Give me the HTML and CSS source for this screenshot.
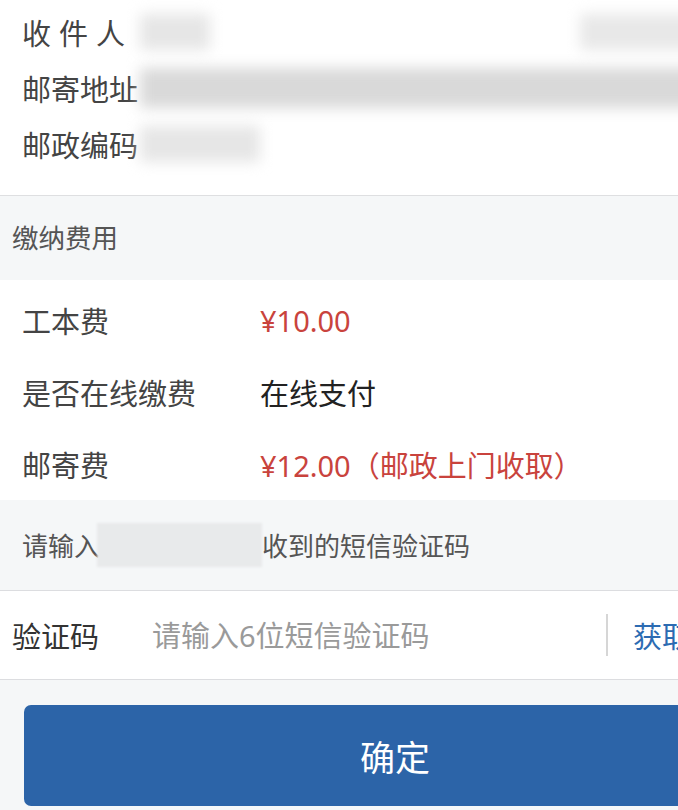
FILE: index.html
```html
<!DOCTYPE html>
<html lang="zh-CN">
<head>
  <meta charset="UTF-8">
  <meta name="viewport" content="width=device-width, initial-scale=1.0">
  <title>缴纳费用</title>
  <link rel="stylesheet" href="styles.css">
</head>
<body>
  <div class="page">
    <!-- 收件信息 -->
    <div class="address">
      <div class="address-row">
        <span class="address-label spaced">收件人</span>
        <span class="mask mask-name"></span>
        <span class="mask mask-phone"></span>
      </div>
      <div class="address-row">
        <span class="address-label">邮寄地址</span>
        <span class="mask mask-addr"></span>
      </div>
      <div class="address-row">
        <span class="address-label">邮政编码</span>
        <span class="mask mask-zip"></span>
      </div>
    </div>

    <div class="section-title">缴纳费用</div>

    <div class="fees">
      <div class="fee-row">
        <span class="fee-label">工本费</span>
        <span class="fee-value price">¥10.00</span>
      </div>
      <div class="fee-row">
        <span class="fee-label">是否在线缴费</span>
        <span class="fee-value">在线支付</span>
      </div>
      <div class="fee-row">
        <span class="fee-label">邮寄费</span>
        <span class="fee-value price">¥12.00（邮政上门收取）</span>
      </div>
    </div>

    <div class="sms-tip">请输入<span class="mask mask-tel"></span>收到的短信验证码</div>

    <div class="code-row">
      <span class="code-label">验证码</span>
      <input class="code-input" type="text" placeholder="请输入6位短信验证码">
      <span class="code-divider"></span>
      <span class="code-btn">获取验证码</span>
    </div>

    <div class="actions">
      <button class="submit-btn">确定</button>
    </div>
  </div>
</body>
</html>
```

FILE: styles.css
```css
body {
  margin: 0;
  overflow: hidden;
  background-color: #f5f7f8;
  font-family: "Noto Sans", "Noto Sans CJK SC", sans-serif;
}
.page {
  width: 790px;
}

/* 收件信息 */
.address {
  background-color: #fff;
  padding: 4px 0 23px 22px;
  border-bottom: 1px solid #dedfe1;
}
.address-row {
  display: flex;
  align-items: center;
  height: 56px;
  font-size: 29px;
  color: #444;
}
.address-label {
  width: 118px;
  flex-shrink: 0;
}
.spaced {
  letter-spacing: 8px;
}
.mask {
  display: inline-block;
  background-color: #dcdcdc;
  filter: blur(7px);
}
.mask-name {
  width: 70px;
  height: 36px;
  background-color: #e6e6e6;
}
.mask-phone {
  width: 120px;
  height: 36px;
  margin-left: auto;
  margin-right: 90px;
  background-color: #e8e8e8;
}
.mask-addr {
  width: 600px;
  height: 40px;
  background-color: #d9d9d9;
}
.mask-zip {
  width: 120px;
  height: 36px;
  background-color: #e6e6e6;
}

/* 缴纳费用 */
.section-title {
  height: 84px;
  line-height: 84px;
  padding-left: 12px;
  font-size: 26.5px;
  color: #555;
  background-color: #f5f7f8;
}
.fees {
  background-color: #fff;
  padding: 4px 0 0 22px;
}
.fee-row {
  display: flex;
  align-items: center;
  height: 72px;
  font-size: 29px;
}
.fee-label {
  width: 238px;
  color: #444;
}
.fee-value {
  color: #222;
}
.price {
  color: #c9433d;
}

/* 短信验证 */
.sms-tip {
  display: flex;
  align-items: center;
  height: 90px;
  padding-left: 22px;
  font-size: 26px;
  color: #555;
  background-color: #f5f7f8;
  border-bottom: 1px solid #dcdde0;
}
.mask-tel {
  width: 165px;
  height: 44px;
  margin-left: -3px;
  background-color: #e8eaeb;
  filter: blur(1px);
}
.code-row {
  display: flex;
  align-items: center;
  height: 88px;
  padding-left: 12px;
  background-color: #fff;
  border-bottom: 1px solid #dcdde0;
  font-size: 29px;
}
.code-label {
  width: 140px;
  color: #333;
}
.code-input {
  flex: 1;
  border: none;
  outline: none;
  padding: 0;
  font-family: inherit;
  font-size: 29px;
  color: #333;
  background: transparent;
}
.code-input::placeholder {
  color: #9a9a9a;
}
.code-divider {
  width: 2px;
  height: 42px;
  background-color: #d6d6d6;
  margin: 0 25px 0 0;
}
.code-btn {
  color: #2c6bb2;
  margin-right: 12px;
}

/* 确定按钮 */
.actions {
  padding: 25px 24px;
}
.submit-btn {
  display: block;
  width: 100%;
  height: 101px;
  border: none;
  border-radius: 7px;
  background-color: #2c64a8;
  color: #fff;
  font-family: inherit;
  font-size: 35px;
}
```
